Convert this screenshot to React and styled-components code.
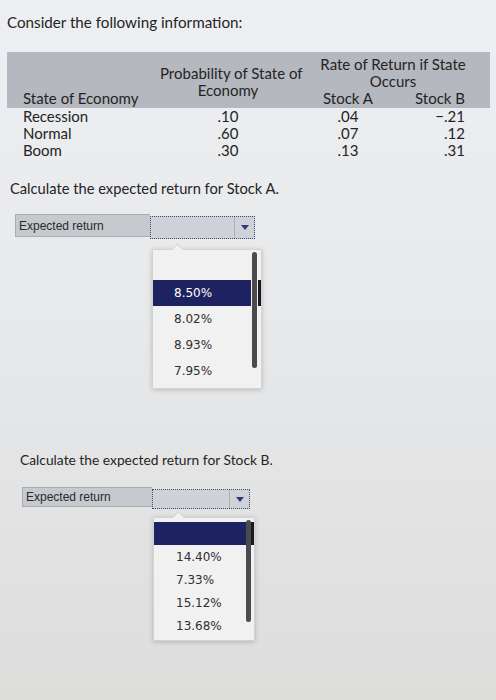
import React from 'react';
import styled, { createGlobalStyle } from 'styled-components';

const GlobalStyle = createGlobalStyle`
  html, body { margin: 0; padding: 0; }
  body {
    background: linear-gradient(180deg, #edeff2 0%, #e8e9eb 45%, #dddddc 100%);
    font-family: Lato, "Open Sans", sans-serif;
    color: #242424;
  }
`;

const Page = styled.div`
  width: 496px;
  height: 700px;
  box-sizing: border-box;
  padding: 13px 6px 0 7px;
  overflow: hidden;
`;

const Title = styled.div`
  font-size: 15.2px;
  line-height: 18px;
`;

const COLS = '153px 136px 104px 90px';

const HeaderGrid = styled.div`
  margin-top: 21px;
  display: grid;
  grid-template-columns: ${COLS};
  grid-template-rows: repeat(3, 17px);
  padding: 4px 0 1px;
  background: #b5b8be;
  font-size: 15px;
  line-height: 17px;
`;

const BodyGrid = styled.div`
  display: grid;
  grid-template-columns: ${COLS};
  grid-template-rows: repeat(3, 17px);
  font-size: 15px;
  line-height: 17px;
`;

const Cell = styled.div`
  grid-column: ${p => p.$col} / span ${p => p.$span || 1};
  grid-row: ${p => p.$row} / span ${p => p.$rspan || 1};
  text-align: ${p => p.$align || 'left'};
  align-self: ${p => p.$valign || 'center'};
  padding-left: ${p => p.$pl || 0}px;
  padding-right: ${p => p.$pr || 0}px;
  white-space: nowrap;
`;

const Question = styled.div`
  font-size: ${p => p.$fs}px;
  line-height: 18px;
  margin-top: ${p => p.$mt}px;
  padding-left: ${p => p.$pl}px;
`;

const Block = styled.div`
  margin-top: ${p => p.$mt}px;
  padding-left: ${p => p.$indent}px;
`;

const SelectRow = styled.div`
  display: flex;
  align-items: stretch;
  height: ${p => p.$h}px;
`;

const Label = styled.div`
  width: ${p => p.$w}px;
  box-sizing: border-box;
  border: 1px solid #a9acb2;
  border-right: none;
  background: #c6c9ce;
  font-family: "Liberation Sans", Arial, sans-serif;
  font-size: 12px;
  color: #2a2a2a;
  display: flex;
  align-items: center;
  padding-left: 3px;
`;

const SelectBox = styled.div`
  width: ${p => p.$w}px;
  box-sizing: border-box;
  margin: 2px 0 -2px;
  border: 1px dotted #3d4c7c;
  background: #cfd2d6;
  display: flex;
  justify-content: flex-end;
  align-items: stretch;
`;

const ArrowCell = styled.div`
  width: 19px;
  border-left: 1px solid #aeb2b8;
  display: flex;
  align-items: center;
  justify-content: center;
`;

const Arrow = styled.div`
  width: 0;
  height: 0;
  border-left: 4px solid transparent;
  border-right: 4px solid transparent;
  border-top: 5px solid #2c3b78;
`;

const List = styled.div`
  position: relative;
  margin-top: ${p => p.$mt}px;
  margin-left: ${p => p.$ml}px;
  width: ${p => p.$w}px;
  box-sizing: border-box;
  padding: ${p => p.$pt}px 0 ${p => p.$pb}px;
  background: #f1f1f1;
  border: 1px solid #d3d3d3;
  box-shadow: 0 1px 5px rgba(0, 0, 0, 0.2);
  display: flex;

  &::before {
    content: '';
    position: absolute;
    top: -5px;
    left: 20px;
    width: 8px;
    height: 8px;
    background: #f1f1f1;
    border-left: 1px solid #d3d3d3;
    border-top: 1px solid #d3d3d3;
    transform: rotate(45deg);
  }
`;

const Options = styled.div`
  flex: 1;
  display: flex;
  flex-direction: column;
`;

const Option = styled.div`
  position: relative;
  height: ${p => p.$h}px;
  display: flex;
  align-items: center;
  padding-left: ${p => p.$pl}px;
  font-family: "DejaVu Sans", Verdana, sans-serif;
  font-size: 12px;
  color: ${p => (p.$active ? '#ffffff' : '#303030')};
  background: ${p => (p.$active ? '#1f2261' : 'transparent')};

  &::after {
    content: '';
    display: ${p => (p.$active ? 'block' : 'none')};
    position: absolute;
    top: 0;
    bottom: 0;
    right: -${p => p.$sw}px;
    width: 3px;
    background: #1a1a1f;
  }
`;

const Scroll = styled.div`
  position: relative;
  z-index: 1;
  width: ${p => p.$w}px;
  display: flex;
  justify-content: flex-start;
`;

const Thumb = styled.div`
  width: 5px;
  margin-left: ${p => p.$ml}px;
  margin-top: ${p => p.$mt - p.$pt}px;
  height: ${p => p.$h}px;
  border-radius: 3px;
  background: #4b4b4d;
`;

function Dropdown({ mt, indent, rowH, labelW, selectW, list }) {
  return (
    <Block $mt={mt} $indent={indent}>
      <SelectRow $h={rowH}>
        <Label $w={labelW}>Expected return</Label>
        <SelectBox $w={selectW}>
          <ArrowCell>
            <Arrow />
          </ArrowCell>
        </SelectBox>
      </SelectRow>
      <List $mt={list.mt} $ml={list.ml} $w={list.w} $pt={list.pt} $pb={list.pb}>
        <Options>
          {list.items.map((it, i) => (
            <Option key={i} $h={list.h} $pl={list.pl} $sw={list.sw} $active={i === list.active}>
              {it}
            </Option>
          ))}
        </Options>
        <Scroll $w={list.sw}>
          <Thumb $ml={list.tml} $mt={2} $pt={list.pt} $h={list.th} />
        </Scroll>
      </List>
    </Block>
  );
}

export default function App() {
  return (
    <>
      <GlobalStyle />
      <Page>
        <Title>Consider the following information:</Title>
        <HeaderGrid>
          <Cell $col={1} $row={3} $pl={16}>State of Economy</Cell>
          <Cell $col={2} $row={1} $rspan={3} $align="center">
            Probability of State of
            <br />
            Economy
          </Cell>
          <Cell $col={3} $row={1} $span={2} $align="center">Rate of Return if State</Cell>
          <Cell $col={3} $row={2} $span={2} $align="center">Occurs</Cell>
          <Cell $col={3} $row={3} $align="center">Stock A</Cell>
          <Cell $col={4} $row={3} $align="right" $pr={25}>Stock B</Cell>
        </HeaderGrid>
        <BodyGrid>
          <Cell $col={1} $row={1} $pl={16}>Recession</Cell>
          <Cell $col={1} $row={2} $pl={16}>Normal</Cell>
          <Cell $col={1} $row={3} $pl={16}>Boom</Cell>
          <Cell $col={2} $row={1} $align="center">.10</Cell>
          <Cell $col={2} $row={2} $align="center">.60</Cell>
          <Cell $col={2} $row={3} $align="center">.30</Cell>
          <Cell $col={3} $row={1} $align="center">.04</Cell>
          <Cell $col={3} $row={2} $align="center">.07</Cell>
          <Cell $col={3} $row={3} $align="center">.13</Cell>
          <Cell $col={4} $row={1} $align="right" $pr={25}>−.21</Cell>
          <Cell $col={4} $row={2} $align="right" $pr={25}>.12</Cell>
          <Cell $col={4} $row={3} $align="right" $pr={25}>.31</Cell>
        </BodyGrid>

        <Question $fs={14.7} $mt={20} $pl={3}>Calculate the expected return for Stock A.</Question>
        <Dropdown
          mt={17}
          indent={8}
          rowH={23}
          labelW={135}
          selectW={105}
          list={{
            mt: 12, ml: 137, w: 110, pt: 4, pb: 4, h: 26, pl: 21, sw: 10, tml: 1, th: 116,
            active: 1,
            items: ['', '8.50%', '8.02%', '8.93%', '7.95%'],
          }}
        />

        <Question $fs={13.8} $mt={62} $pl={13}>Calculate the expected return for Stock B.</Question>
        <Dropdown
          mt={18}
          indent={15}
          rowH={20}
          labelW={130}
          selectW={98}
          list={{
            mt: 10, ml: 131, w: 102, pt: 4, pb: 3, h: 23, pl: 22, sw: 8, tml: 0, th: 102,
            active: 0,
            items: ['', '14.40%', '7.33%', '15.12%', '13.68%'],
          }}
        />
      </Page>
    </>
  );
}
